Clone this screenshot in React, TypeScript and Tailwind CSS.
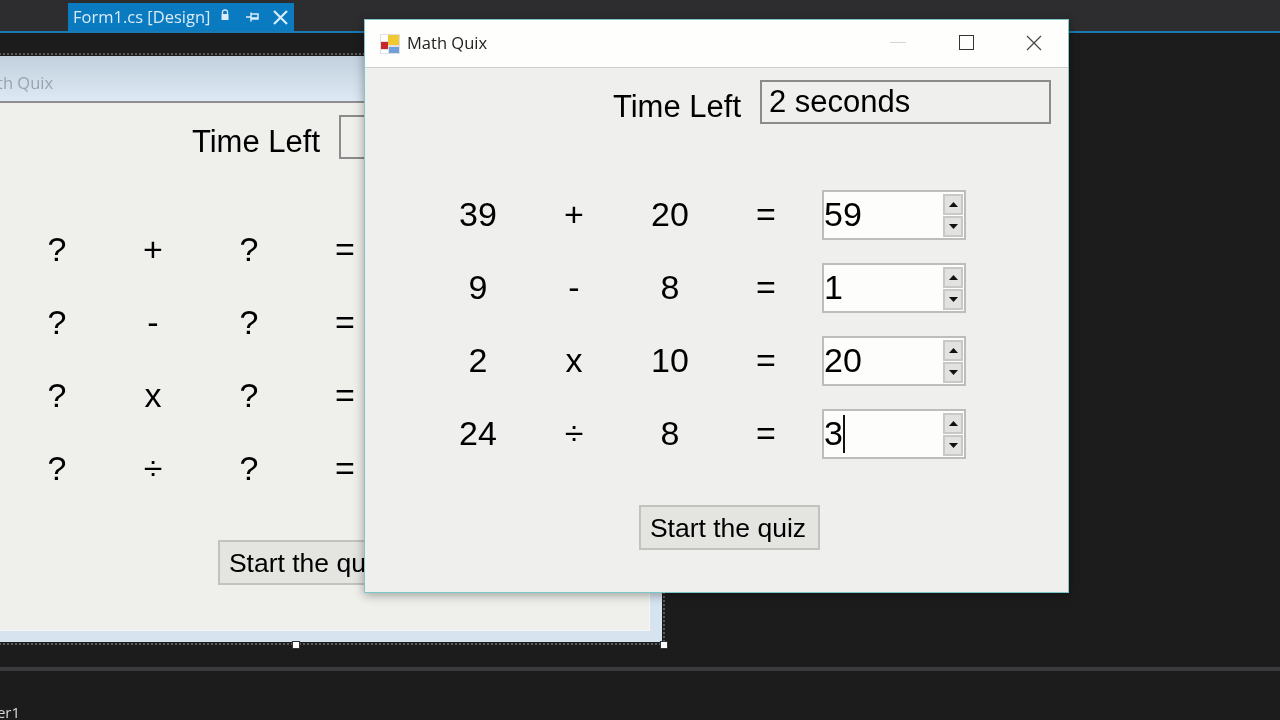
type Row = [string, string, string, string];

const frontRows: Row[] = [
  ["39", "+", "20", "59"],
  ["9", "-", "8", "1"],
  ["2", "x", "10", "20"],
  ["24", "÷", "8", "3"],
];

const backRows: Row[] = [
  ["?", "+", "?", ""],
  ["?", "-", "?", ""],
  ["?", "x", "?", ""],
  ["?", "÷", "?", ""],
];

const Arrow = ({ down }: { down?: boolean }) => (
  <svg width="9" height="5" viewBox="0 0 9 5" className={down ? "rotate-180" : ""}>
    <polygon points="4.5,0 9,5 0,5" fill="#111" />
  </svg>
);

const Spinner = ({ value, caret }: { value: string; caret?: boolean }) => (
  <div className="ml-2 flex h-[50px] w-[144px] items-center justify-between border-2 border-[#bdbdbd] bg-[#fdfdfb] pr-[1px]">
    <div className="flex items-center text-[34px] leading-none text-black">
      <span className="mb-[2px]">{value}</span>
      {caret && <span className="h-[38px] w-[2px] bg-[#111]" />}
    </div>
    <div className="flex w-[20px] flex-col gap-[1px]">
      <div className="flex h-[21px] items-center justify-center border-2 border-[#c8c8c8] bg-[#e2e2e0]">
        <Arrow />
      </div>
      <div className="flex h-[21px] items-center justify-center border-2 border-[#c8c8c8] bg-[#e2e2e0]">
        <Arrow down />
      </div>
    </div>
  </div>
);

const QuizBody = ({ rows, time }: { rows: Row[]; time: string }) => (
  <div className="w-[702px] font-['Liberation_Sans',sans-serif] text-black">
    <div className="flex justify-end gap-[19px] pr-4 pt-3">
      <span className="mt-[9px] text-[31px] leading-[36px]">Time Left</span>
      <div className="h-[44px] w-[291px] border-2 border-[#8b8b8b] pl-[7px] pt-[2px] text-[31px] leading-[36px]">
        {time}
      </div>
    </div>
    <div className="ml-[65px] mt-[65px] grid grid-cols-[96px_96px_96px_96px_152px] gap-y-[23px] leading-none">
      {rows.map((r, i) => (
        <div key={i} className="contents">
          <div className="flex items-center justify-center pb-[2px] text-[34px]">{r[0]}</div>
          <div className="flex items-center justify-center pb-[2px] text-[34px]">{r[1]}</div>
          <div className="flex items-center justify-center pb-[2px] text-[34px]">{r[2]}</div>
          <div className="flex items-center justify-center pb-[2px] text-[34px]">=</div>
          <Spinner value={r[3]} caret={i === 3 && r[3] !== ""} />
        </div>
      ))}
    </div>
    <div className="ml-[274px] mt-[46px] flex h-[45px] w-[181px] items-center justify-center border-2 border-[#c2c2be] bg-[#e4e4e1] pr-[3px] pt-[2px] text-[26.5px]">
      Start the quiz
    </div>
  </div>
);

const AppIcon = () => (
  <svg width="20" height="20" viewBox="0 0 20 20">
    <rect x="0" y="0" width="20" height="20" fill="#dfdfdf" />
    <rect x="1" y="1" width="7" height="6" fill="#fff" />
    <rect x="8" y="1" width="11" height="10" fill="#f2c933" />
    <rect x="1" y="8" width="7" height="7" fill="#c8252c" />
    <rect x="9" y="13" width="10" height="6" fill="#6f9fdc" />
    <rect x="1" y="16" width="7" height="3" fill="#fff" />
  </svg>
);

export default function App() {
  return (
    <div className="flex h-[720px] w-[1280px] flex-col overflow-hidden bg-[#1c1c1c] blur-[0.4px]">
      {/* ide tab strip */}
      <div className="h-[31px] bg-[#2d2d30] pl-[68px] pt-[3px]">
        <div className="flex h-[28px] w-[226px] items-center bg-[#0a7bc0] pl-[5px] font-['Open_Sans',sans-serif] text-[16.5px] text-[#d9ecf8]">
          <span>Form1.cs [Design]</span>
          <svg width="10" height="12" viewBox="0 0 10 12" className="mb-1 ml-[10px]" fill="none">
            <path d="M2.5 5V3a2.5 2 0 0 1 5 0v2" stroke="#d9ecf8" strokeWidth="1.3" />
            <rect x="1.5" y="5" width="7" height="6" fill="#d9ecf8" />
          </svg>
          <svg width="14" height="12" viewBox="0 0 14 12" className="ml-4" fill="none" stroke="#d9ecf8" strokeWidth="1.5">
            <path d="M0 6h5M5 1.5v9M5 3h7v5H5M5 7h7" />
          </svg>
          <svg width="15" height="15" viewBox="0 0 15 15" className="ml-[13px]" stroke="#d9ecf8" strokeWidth="2.2">
            <path d="M1 1l13 13M14 1L1 14" />
          </svg>
        </div>
      </div>
      <div className="h-[2px] bg-[#1b79b4]" />

      {/* designer surface */}
      <div className="relative h-[634px]">
        <div className="absolute left-[-60px] top-[20px] h-[592px] w-[725px] border-[2px] border-dotted border-[#5a5a5a]" />
        <div className="absolute left-[-56px] top-[23px] flex h-[586px] w-[718px] flex-col bg-[#d7e3ef]">
          <div className="h-[47px] border-b-2 border-[#8f8f8f] bg-gradient-to-b from-[#c2d1de] to-[#dde9f4] pl-[29px] pt-[15px] font-['Open_Sans',sans-serif] text-[16.5px] leading-[24px] text-[#98a4ad]">
            Math Quix
          </div>
          <div className="h-[528px] w-[706px] overflow-hidden border-b border-r border-[#f4f7fa] bg-[#efefeb]">
            <QuizBody rows={backRows} time="" />
          </div>
        </div>
        <div className="absolute left-[292px] top-[608px] h-2 w-2 border border-[#333] bg-white" />
        <div className="absolute left-[660px] top-[608px] h-2 w-2 border border-[#333] bg-white" />

        {/* running form */}
        <div className="absolute left-[364px] top-[-14px] h-[574px] w-[705px] border border-[#7fc6c9] bg-[#efefed] shadow-[0_2px_10px_rgba(0,0,0,0.35)]">
          <div className="flex h-[48px] items-center border-b border-[#cfcfcf] bg-[#fefefc] pl-[15px]">
            <AppIcon />
            <span className="ml-[7px] font-['Open_Sans',sans-serif] text-[16.5px] text-[#222]">Math Quix</span>
            <div className="mb-[2px] ml-auto flex items-center">
              <div className="flex w-[68px] justify-center">
                <div className="h-[1px] w-4 bg-[#d4d4d4]" />
              </div>
              <div className="flex w-[68px] justify-center">
                <div className="h-[15px] w-[15px] border-[1.5px] border-[#333]" />
              </div>
              <div className="flex w-[68px] justify-center">
                <svg width="16" height="16" viewBox="0 0 16 16" stroke="#444" strokeWidth="1.2">
                  <path d="M1 1l14 14M15 1L1 15" />
                </svg>
              </div>
            </div>
          </div>
          <QuizBody rows={frontRows} time="2 seconds" />
        </div>
      </div>

      {/* output panel */}
      <div className="h-1 bg-[#3a3a3f]" />
      <div className="relative flex-1">
        <span className="absolute bottom-[-3px] left-[-29px] font-['Open_Sans',sans-serif] text-[15px] text-[#d8d8d8]">Timer1</span>
      </div>
    </div>
  );
}
